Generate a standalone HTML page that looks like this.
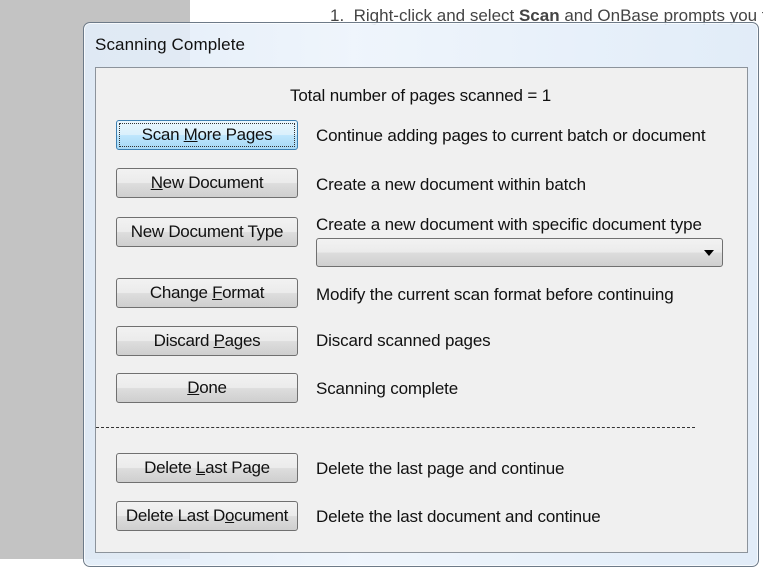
<!DOCTYPE html>
<html><head><meta charset="utf-8"><style>
*{margin:0;padding:0;box-sizing:border-box}
body{width:763px;height:559px;overflow:hidden;position:relative;background:#fff;font-family:"Liberation Sans",sans-serif;color:#111}
.gray{position:absolute;left:0;top:0;width:190px;height:559px;background:#c3c3c3}
.doc{position:absolute;left:330px;top:6px;font-size:17px;color:#444;white-space:nowrap}
.win{position:absolute;left:83px;top:22px;width:676px;height:545px;border:1px solid #6d7a88;border-radius:7px;background:linear-gradient(90deg,rgba(225,236,248,.93),rgba(236,243,251,.85) 40%,rgba(220,233,247,.85));box-shadow:inset 0 0 0 1px rgba(255,255,255,.7)}
.title{position:absolute;left:95px;top:35px;font-size:17px;letter-spacing:0.1px;color:#111}
.panel{position:absolute;left:95px;top:67px;width:653px;height:486px;background:#f0f0f0;border:1px solid #8c939b}
.t{position:absolute;font-size:17px;letter-spacing:-0.15px;white-space:nowrap;color:#111}
.btn{position:absolute;left:116px;width:182px;height:30px;border:1px solid #707070;border-radius:3px;background:linear-gradient(#f2f2f2,#ebebeb 50%,#dddddd 51%,#cfcfcf);font-size:17px;letter-spacing:-0.3px;text-align:center;line-height:28px;white-space:nowrap;color:#111}
.btn.f{border-color:#3c7fb1;background:linear-gradient(#eaf6fd,#d9f0fc 50%,#bee6fd 51%,#a7d9f5)}
.btn.f:after{content:"";position:absolute;left:2px;top:2px;right:2px;bottom:2px;border:1px dotted #333}
u{text-decoration:underline}
.dd{position:absolute;left:316px;top:238px;width:407px;height:29px;border:1px solid #707070;border-radius:3px;background:linear-gradient(#f2f2f2,#ebebeb 50%,#dddddd 51%,#cfcfcf)}
.dd:after{content:"";position:absolute;right:8px;top:11px;border-left:5px solid transparent;border-right:5px solid transparent;border-top:6px solid #000}
.dash{position:absolute;left:96px;top:427px;width:599px;border-top:1px dashed #333}
</style></head><body>
<div class="gray"></div>
<div class="doc">1.&nbsp; Right-click and select <b>Scan</b> and OnBase prompts you fo</div>
<div class="win"></div>
<div class="title">Scanning Complete</div>
<div class="panel"></div>
<div class="t" style="left:290px;top:86px">Total number of pages scanned = 1</div>
<div class="btn f" style="top:120px">Scan <u>M</u>ore Pages</div>
<div class="t" style="left:316px;top:126px">Continue adding pages to current batch or document</div>
<div class="btn" style="top:168px"><u>N</u>ew Document</div>
<div class="t" style="left:316px;top:175px">Create a new document within batch</div>
<div class="btn" style="top:217px">New Document Type</div>
<div class="t" style="left:316px;top:215px">Create a new document with specific document type</div>
<div class="dd"></div>
<div class="btn" style="top:278px">Change <u>F</u>ormat</div>
<div class="t" style="left:316px;top:285px">Modify the current scan format before continuing</div>
<div class="btn" style="top:326px">Discard <u>P</u>ages</div>
<div class="t" style="left:316px;top:331px">Discard scanned pages</div>
<div class="btn" style="top:373px"><u>D</u>one</div>
<div class="t" style="left:316px;top:379px">Scanning complete</div>
<div class="dash"></div>
<div class="btn" style="top:453px">Delete <u>L</u>ast Page</div>
<div class="t" style="left:316px;top:459px">Delete the last page and continue</div>
<div class="btn" style="top:501px">Delete Last D<u>o</u>cument</div>
<div class="t" style="left:316px;top:507px">Delete the last document and continue</div>
</body></html>
